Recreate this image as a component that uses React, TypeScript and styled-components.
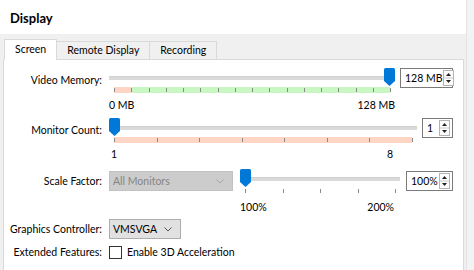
import styled, { createGlobalStyle } from 'styled-components'

const GlobalStyle = createGlobalStyle`
  html, body {
    margin: 0;
    padding: 0;
    background: #f0f0f0;
    overflow: hidden;
  }
  body {
    font-family: Lato, "Liberation Sans", sans-serif;
    font-size: 10.5px;
    color: #000;
  }
`

type Segment = { from: number; to: number; color: string }

function Thumb() {
  return (
    <svg width="11" height="18" viewBox="0 0 11 18">
      <path d="M0 1.5 Q0 0 1.5 0 H9.5 Q11 0 11 1.5 V13 L5.5 18 L0 13 Z" fill="#0078d7" />
    </svg>
  )
}

function Chevron(props: { color: string }) {
  return (
    <svg width="8" height="5" viewBox="0 0 8 5">
      <polyline points="0.5,0.5 4,4 7.5,0.5" fill="none" stroke={props.color} strokeWidth="1" />
    </svg>
  )
}

function SpinArrows() {
  return (
    <ArrowBox>
      <svg width="9" height="14" viewBox="0 0 9 14">
        <path d="M4.5 2 L7 5 H2 Z" fill="#222" />
        <line x1="0" y1="7" x2="9" y2="7" stroke="#c8c8c8" />
        <path d="M4.5 12 L7 9 H2 Z" fill="#222" />
      </svg>
    </ArrowBox>
  )
}

function Slider(props: { value: number; ticks: number; segments?: Segment[] }) {
  const marks = []
  for (let i = 0; i <= props.ticks; i++) {
    marks.push(<Tick key={i} style={{ left: `${(i / props.ticks) * 100}%` }} />)
  }
  return (
    <SliderBox>
      <GrooveArea>
        <Groove />
        <ThumbWrap style={{ left: `calc(${props.value} * (100% - 11px))` }}>
          <Thumb />
        </ThumbWrap>
      </GrooveArea>
      <Band>
        {props.segments &&
          props.segments.map((s, i) => (
            <Seg
              key={i}
              style={{ left: `${s.from * 100}%`, width: `${(s.to - s.from) * 100}%`, background: s.color }}
            />
          ))}
        {marks}
      </Band>
    </SliderBox>
  )
}

function SpinBox(props: { text: string; width: number }) {
  return (
    <Spin $w={props.width}>
      <span>{props.text}</span>
      <SpinArrows />
    </Spin>
  )
}

export default function App() {
  return (
    <>
      <GlobalStyle />
      <Page>
        <Main>
          <Header>Display</Header>
          <TabBar>
            <Tab $active>Screen</Tab>
            <Tab>Remote Display</Tab>
            <Tab>Recording</Tab>
          </TabBar>
          <Pane>
            <SliderRow $top={8}>
              <Label>Video Memory:</Label>
              <Slider
                value={1}
                ticks={16}
                segments={[
                  { from: 0, to: 1 / 16, color: '#fdd5c4' },
                  { from: 1 / 16, to: 1, color: '#c9f7c3' },
                ]}
              />
              <SpinBox text="128 MB" width={53} />
            </SliderRow>
            <ScaleRow $top={5}>
              <span />
              <ScaleText $pad={0}>
                <span>0 MB</span>
                <span>128 MB</span>
              </ScaleText>
            </ScaleRow>
            <SliderRow $top={5}>
              <Label>Monitor Count:</Label>
              <Slider value={0} ticks={7} segments={[{ from: 0, to: 1, color: '#fdd5c4' }]} />
              <SpinBox text="1" width={31} />
            </SliderRow>
            <ScaleRow $top={4}>
              <span />
              <ScaleText $pad={2}>
                <span>1</span>
                <span>8</span>
              </ScaleText>
            </ScaleRow>
            <ScaleFactorRow>
              <Label>Scale Factor:</Label>
              <Combo $disabled $w={124}>
                <span>All Monitors</span>
                <Chevron color="#a9a9a9" />
              </Combo>
              <Slider value={0} ticks={4} />
              <SpinBox text="100%" width={47} />
            </ScaleFactorRow>
            <ScaleFactorLabels>
              <span />
              <span />
              <ScaleText $pad={0}>
                <span>100%</span>
                <span>200%</span>
              </ScaleText>
            </ScaleFactorLabels>
            <FormRow $top={4}>
              <Label>Graphics Controller:</Label>
              <Combo $w={72}>
                <span>VMSVGA</span>
                <Chevron color="#555" />
              </Combo>
            </FormRow>
            <FormRow $top={6}>
              <Label>Extended Features:</Label>
              <CheckLine>
                <Box />
                <span>Enable 3D Acceleration</span>
              </CheckLine>
            </FormRow>
          </Pane>
        </Main>
        <Strip />
      </Page>
    </>
  )
}

const Page = styled.div`
  display: flex;
  width: 474px;
  height: 270px;
  overflow: hidden;
`

const Main = styled.div`
  flex: 1;
  display: flex;
  flex-direction: column;
`

const Strip = styled.div`
  width: 7px;
  background: #f3f3f3;
  border-left: 1px solid #e4e4e4;
`

const Header = styled.div`
  height: 34px;
  background: #fff;
  font-weight: bold;
  font-size: 13px;
  line-height: 36px;
  padding-left: 10px;
`

const TabBar = styled.div`
  display: flex;
  align-items: flex-end;
  padding: 5px 0 0 4px;
  height: 21px;
  position: relative;
  z-index: 1;
  margin-bottom: -1px;
`

const Tab = styled.div<{ $active?: boolean }>`
  height: ${(p) => (p.$active ? 21 : 19)}px;
  box-sizing: border-box;
  padding: 0 10px;
  border: 1px solid #d9d9d9;
  border-bottom: ${(p) => (p.$active ? '1px solid #fff' : '1px solid #d9d9d9')};
  background: ${(p) => (p.$active ? '#fff' : '#f0f0f0')};
  margin-left: ${(p) => (p.$active ? 0 : -1)}px;
  line-height: ${(p) => (p.$active ? 19 : 17)}px;
  white-space: nowrap;
`

const Pane = styled.div`
  flex: 1;
  margin: 0 2px 0 3px;
  background: #fff;
  border: 1px solid #d9d9d9;
  border-bottom: none;
  padding: 0 10px 0 0;
  display: flex;
  flex-direction: column;
`

const SliderRow = styled.div<{ $top: number }>`
  display: grid;
  grid-template-columns: 98px 1fr auto;
  column-gap: 5px;
  align-items: start;
  margin-top: ${(p) => p.$top}px;
  & > :nth-child(2) {
    margin-left: 2px;
  }
`

const ScaleFactorRow = styled.div`
  display: grid;
  grid-template-columns: 98px 124px 1fr auto;
  column-gap: 6px;
  align-items: start;
  margin-top: 7px;
  & > :nth-child(2) {
    margin-left: 1px;
    margin-top: 2px;
  }
  & > :nth-child(3) {
    margin-left: 2px;
  }
  & > :nth-child(4) {
    margin-top: 2px;
  }
`

const ScaleFactorLabels = styled(ScaleFactorRow)`
  margin-top: 6px;
  & > :nth-child(3) {
    margin-left: 2px;
  }
  margin-right: 53px;
`

const ScaleRow = styled.div<{ $top: number }>`
  display: grid;
  grid-template-columns: 98px 1fr;
  column-gap: 7px;
  margin-top: ${(p) => p.$top}px;
  margin-right: 58px;
  & + & {
    margin-right: 36px;
  }
`

const ScaleText = styled.div<{ $pad: number }>`
  display: flex;
  justify-content: space-between;
  padding: 0 ${(p) => p.$pad}px;
  line-height: 15px;
`

const Label = styled.div`
  text-align: right;
  white-space: nowrap;
  line-height: 15px;
  padding-top: 5px;
`

const SliderBox = styled.div`
  display: flex;
  flex-direction: column;
`

const GrooveArea = styled.div`
  position: relative;
  height: 18px;
`

const Groove = styled.div`
  position: absolute;
  left: 0;
  right: 0;
  top: 8px;
  height: 3px;
  background: #dadada;
  border-top: 1px solid #cfcfcf;
`

const ThumbWrap = styled.div`
  position: absolute;
  top: 0;
  width: 11px;
  height: 18px;
  line-height: 0;
`

const Band = styled.div`
  position: relative;
  height: 6px;
  margin: 1px 5px 0 5px;
`

const Seg = styled.div`
  position: absolute;
  top: 0;
  bottom: 0;
`

const Tick = styled.div`
  position: absolute;
  top: 1px;
  width: 1px;
  height: 4px;
  background: #8a8a8a;
`

const Spin = styled.div<{ $w: number }>`
  width: ${(p) => p.$w}px;
  height: 20px;
  box-sizing: border-box;
  border: 1px solid #7a7a7a;
  background: #fff;
  display: flex;
  align-items: center;
  justify-content: space-between;
  padding: 0 2px 0 4px;
  line-height: 18px;
  white-space: nowrap;
`

const ArrowBox = styled.div`
  width: 11px;
  height: 16px;
  flex-shrink: 0;
  box-sizing: border-box;
  border: 1px solid #b4b4b4;
  background: #fdfdfd;
  display: flex;
  align-items: center;
  justify-content: center;
  line-height: 0;
`

const Combo = styled.div<{ $disabled?: boolean; $w: number }>`
  width: ${(p) => p.$w}px;
  height: 20px;
  box-sizing: border-box;
  border: 1px solid ${(p) => (p.$disabled ? '#c2c2c2' : '#adadad')};
  background: ${(p) => (p.$disabled ? '#cccccc' : '#e1e1e1')};
  color: ${(p) => (p.$disabled ? '#858585' : '#000')};
  display: flex;
  align-items: center;
  justify-content: space-between;
  padding: 0 8px 0 3px;
  line-height: 18px;
  white-space: nowrap;
`

const FormRow = styled.div<{ $top: number }>`
  display: grid;
  grid-template-columns: 98px auto;
  column-gap: 7px;
  align-items: center;
  justify-content: start;
  margin-top: ${(p) => p.$top}px;
  & > ${Label} {
    padding-top: 0;
  }
`

const CheckLine = styled.div`
  display: flex;
  align-items: center;
  gap: 5px;
  line-height: 15px;
`

const Box = styled.div`
  width: 13px;
  height: 13px;
  box-sizing: border-box;
  border: 1px solid #333;
  background: #fff;
`
